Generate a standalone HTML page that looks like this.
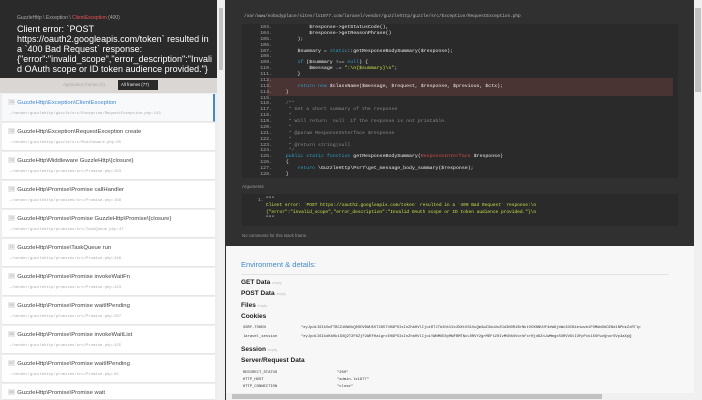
<!DOCTYPE html>
<html><head><meta charset="utf-8"><style>
*{margin:0;padding:0;box-sizing:border-box}
html,body{width:702px;height:400px;overflow:hidden}
body{background:#303030;font-family:"Liberation Sans",sans-serif;position:relative}
.abs{position:absolute}
.left{left:0;top:0;width:217px;height:400px;background:#eeeeee}
.hdr{left:0;top:0;width:217px;height:78px;background:#2a2a2a;padding:15px 0 0 17px;overflow:hidden}
.hdr .cls{font-size:5px;color:#aaa;}
.hdr .msg{font-size:9px;color:#fff;line-height:10px;margin-top:3px;white-space:nowrap}
.tabs{left:0;top:78px;width:217px;height:15px;background:#dad6d4}
.frame{position:absolute;left:2px;width:213px;height:28px;background:#fff;border-bottom:1px solid #e6e6e6}
.frame .t{position:absolute;left:6px;top:5px;font-size:5.9px;color:#444;white-space:nowrap}
.frame .n{display:inline-block;background:#e8e8e8;color:#aaa;font-size:3.8px;padding:1px 1.5px;margin-right:2px;vertical-align:1px}
.frame .p{position:absolute;left:7px;top:18px;font-family:"Liberation Mono",monospace;font-size:3.9px;color:#aaa;white-space:nowrap}
.mono{font-family:"Liberation Mono",monospace}
.code{left:242px;top:24px;width:436px;height:154px;background:#2a2a2a;overflow:hidden}
.ln{position:absolute;left:0;width:30px;text-align:right;font-size:4.9px;line-height:5.87px;color:#aaa;font-family:"Liberation Mono",monospace}
.cl{position:absolute;left:32px;font-size:4.9px;line-height:5.87px;color:#eee;white-space:pre;font-family:"Liberation Mono",monospace}
.k{color:#2b9fc4}.s{color:#c6e14a}.r{color:#d64c4c}.c{color:#888}
.env{left:226px;top:246px;width:468px;height:147px;background:#f7f7f7;overflow:hidden}
.h{position:absolute;left:15px;font-weight:bold;font-size:6.5px;color:#222}
.h small{font-weight:normal;font-size:3.5px;color:#bbb}
.kv{position:absolute;font-family:"Liberation Mono",monospace;font-size:3.8px;color:#333;white-space:nowrap}
</style></head><body>
<div class="abs left"></div>
<div class="abs hdr"><div class="cls">GuzzleHttp \ Exception \ <span style="color:#e95353">ClientException</span> (400)</div>
<div class="msg">Client error: `POST<br>https://oauth2.googleapis.com/token` resulted in<br>a `400 Bad Request` response:<br>{"error":"invalid_scope","error_description":"Invali<br>d OAuth scope or ID token audience provided."}</div></div>
<div class="abs tabs"><span class="abs" style="left:63px;top:4px;font-size:4.3px;color:#aaa">Application frames (2)</span><span class="abs" style="left:118px;top:2px;height:10px;width:40px;background:#2a2a2a;color:#eee;font-size:4.3px;padding:2px 3px">All frames (77)</span></div>
<div class="frame" style="top:94px;border-right:2px solid #4288ce;background:#f8f9fb"><div class="t" style="color:#4288ce"><span class="n">76</span>GuzzleHttp\Exception\ClientException</div><div class="p">…/vendor/guzzlehttp/guzzle/src/Exception/RequestException.php:113</div></div>
<div class="frame" style="top:123px"><div class="t"><span class="n">75</span>GuzzleHttp\Exception\RequestException create</div><div class="p">…/vendor/guzzlehttp/guzzle/src/Middleware.php:65</div></div>
<div class="frame" style="top:152px"><div class="t"><span class="n">74</span>GuzzleHttp\Middleware GuzzleHttp\{closure}</div><div class="p">…/vendor/guzzlehttp/promises/src/Promise.php:203</div></div>
<div class="frame" style="top:181px"><div class="t"><span class="n">73</span>GuzzleHttp\Promise\Promise callHandler</div><div class="p">…/vendor/guzzlehttp/promises/src/Promise.php:156</div></div>
<div class="frame" style="top:210px"><div class="t"><span class="n">72</span>GuzzleHttp\Promise\Promise GuzzleHttp\Promise\{closure}</div><div class="p">…/vendor/guzzlehttp/promises/src/TaskQueue.php:47</div></div>
<div class="frame" style="top:239px"><div class="t"><span class="n">71</span>GuzzleHttp\Promise\TaskQueue run</div><div class="p">…/vendor/guzzlehttp/promises/src/Promise.php:246</div></div>
<div class="frame" style="top:268px"><div class="t"><span class="n">70</span>GuzzleHttp\Promise\Promise invokeWaitFn</div><div class="p">…/vendor/guzzlehttp/promises/src/Promise.php:223</div></div>
<div class="frame" style="top:297px"><div class="t"><span class="n">69</span>GuzzleHttp\Promise\Promise waitIfPending</div><div class="p">…/vendor/guzzlehttp/promises/src/Promise.php:267</div></div>
<div class="frame" style="top:326px"><div class="t"><span class="n">68</span>GuzzleHttp\Promise\Promise invokeWaitList</div><div class="p">…/vendor/guzzlehttp/promises/src/Promise.php:225</div></div>
<div class="frame" style="top:355px"><div class="t"><span class="n">67</span>GuzzleHttp\Promise\Promise waitIfPending</div><div class="p">…/vendor/guzzlehttp/promises/src/Promise.php:62</div></div>
<div class="frame" style="top:384px;height:16px"><div class="t"><span class="n">66</span>GuzzleHttp\Promise\Promise wait</div></div>
<div class="abs" style="left:217px;top:0;width:8px;height:400px;background:#f0f0f0"></div>
<div class="abs" style="left:219px;top:8px;width:4px;height:62px;background:#c1c1c1"></div>

<div class="abs mono" style="left:244px;top:14px;font-size:4.4px;color:#bbb;white-space:nowrap">/var/www/nobodyplace/sites/lx1977.com/laravel/vendor/guzzlehttp/guzzle/src/Exception/RequestException.php</div>
<div class="abs code">
<div class="abs" style="left:25px;top:54px;width:406px;height:18px;background:#4a3333"></div>
<div class="ln" style="top:1px">103.<br>104.<br>105.<br>106.<br>107.<br>108.<br>109.<br>110.<br>111.<br>112.<br>113.<br>114.<br>115.<br>116.<br>117.<br>118.<br>119.<br>120.<br>121.<br>122.<br>123.<br>124.<br>125.<br>126.<br>127.<br>128.</div>
<div class="cl" style="top:1px">            $response-&gt;getStatusCode(),
            $response-&gt;getReasonPhrase()
        );

        $summary = <span class="k">static</span>::getResponseBodySummary($response);

        <span class="k">if</span> ($summary !== <span class="k">null</span>) {
            $message .= <span class="s">":\n{$summary}\n"</span>;
        }

        <span class="k">return new</span> $className($message, $request, $response, $previous, $ctx);
    }

    <span class="c">/**
     * Get a short summary of the response
     *
     * Will return `null` if the response is not printable.
     *
     * @param ResponseInterface $response
     *
     * @return string|null
     */</span>
    <span class="k">public static function</span> getResponseBodySummary(<span class="r">ResponseInterface</span> $response)
    {
        <span class="k">return</span> \GuzzleHttp\Psr7\get_message_body_summary($response);
    }</div>
</div>
<div class="abs" style="left:242px;top:184px;font-size:4.5px;color:#999">Arguments</div>
<div class="abs" style="left:242px;top:194px;width:436px;height:32px;background:#2a2a2a"></div>
<div class="abs mono" style="left:258px;top:198px;font-size:4.5px;color:#aaa">1.</div>
<div class="abs mono" style="left:266px;top:197px;font-size:4.5px;line-height:6.3px;color:#c6e14a;white-space:pre"><span style="color:#ddd">"""</span>
Client error: `POST https://oauth2.googleapis.com/token` resulted in a `400 Bad Request` response:\n
{"error":"invalid_scope","error_description":"Invalid OAuth scope or ID token audience provided."}\n
<span style="color:#ddd">"""</span></div>
<div class="abs" style="left:242px;top:233px;font-size:4.3px;color:#999">No comments for this stack frame.</div>

<div class="abs env">
<div class="abs" style="left:15px;top:14px;font-size:7.5px;color:#4288ce">Environment &amp; details:</div>
<div class="abs" style="left:15px;top:28px;width:428px;height:1px;background:#e3e3e3"></div>
<div class="h" style="top:33px">GET Data <small>empty</small></div>
<div class="h" style="top:44px">POST Data <small>empty</small></div>
<div class="h" style="top:56px">Files <small>empty</small></div>
<div class="h" style="top:67px">Cookies</div>
<div class="kv" style="left:17px;top:80px">XSRF-TOKEN</div>
<div class="kv" style="left:75px;top:80px">"eyJpdiI6Ik5mTTBCZ1NWVkQ0SDVDWU5UT285TU09PSIsInZhbHVlIjoiRTJTb3htU2c2NXtUS1VuQm3wZ3duUnZUd3NOR1BrNktVOXNNUUF4eW9jbWc3OCB4e1wvb1FOMWdUbDZNd1NPbkZxRTlp</div>
<div class="kv" style="left:17px;top:89px">laravel_session</div>
<div class="kv" style="left:75px;top:89px">"eyJpdiI6IkdKb0k1SXQ2T2F6ZjF2WEFHa1grcE09PSIsInZhbHVlIjoiYWNMUE8yMWFBMTNcL0RVY2grMDFtZ0IvMVNhUVorbFcrRjd6ZnJwMmgxSURVVGtIUFpPck1XUFwvQnorSVp3aXpQ</div>
<div class="h" style="top:100px">Session <small>empty</small></div>
<div class="h" style="top:111px">Server/Request Data</div>
<div class="kv" style="left:17px;top:125px">REDIRECT_STATUS</div><div class="kv" style="left:111px;top:125px">"200"</div>
<div class="kv" style="left:17px;top:132px">HTTP_HOST</div><div class="kv" style="left:111px;top:132px">"admin.lx1977"</div>
<div class="kv" style="left:17px;top:139px">HTTP_CONNECTION</div><div class="kv" style="left:111px;top:139px">"close"</div>
</div>
<div class="abs" style="left:694px;top:0;width:8px;height:393px;background:#f0f0f0"></div>
<div class="abs" style="left:695px;top:8px;width:6px;height:84px;background:#c1c1c1"></div>
<div class="abs" style="left:226px;top:393px;width:476px;height:7px;background:#f0f0f0"></div>
<div class="abs" style="left:232px;top:394px;width:370px;height:5px;background:#c1c1c1"></div>
</body></html>
